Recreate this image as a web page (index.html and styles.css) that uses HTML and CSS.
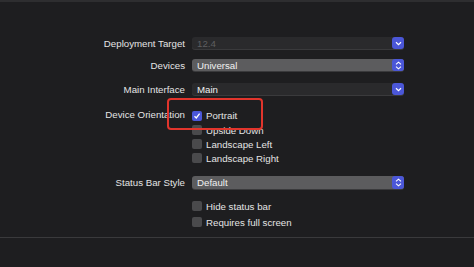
FILE: index.html
```html
<!DOCTYPE html>
<html>
  <head>
    <meta charset="UTF-8" />
    <meta name="viewport" content="width=device-width,initial-scale=1" />
    <title>Deployment Info</title>
    <link rel="stylesheet" href="styles.css">
  </head>
  <body>
    <div class="topbar"></div>
    <div class="panel">
      <div class="row popup-row first">
        <div class="label">Deployment Target</div>
        <div class="popup dim">
          <span class="value muted">12.4</span>
          <span class="arrow">
            <svg width="7" height="5" viewBox="0 0 7 5"><path d="M1 1.2 L3.5 3.6 L6 1.2" fill="none" stroke="#fff" stroke-width="1.2"/></svg>
          </span>
        </div>
      </div>
      <div class="row popup-row devices">
        <div class="label">Devices</div>
        <div class="popup">
          <span class="value">Universal</span>
          <span class="arrow">
            <svg width="7" height="9" viewBox="0 0 7 9"><path d="M1 3.4 L3.5 1.2 L6 3.4 M1 5.6 L3.5 7.8 L6 5.6" fill="none" stroke="#fff" stroke-width="1.1"/></svg>
          </span>
        </div>
      </div>
      <div class="row popup-row main">
        <div class="label">Main Interface</div>
        <div class="popup dim">
          <span class="value">Main</span>
          <span class="arrow">
            <svg width="7" height="5" viewBox="0 0 7 5"><path d="M1 1.2 L3.5 3.6 L6 1.2" fill="none" stroke="#fff" stroke-width="1.2"/></svg>
          </span>
        </div>
      </div>
      <div class="row check-group orientation">
        <div class="label">Device Orientation</div>
        <div class="checks">
          <div class="check first-check">
            <span class="box on">
              <svg width="8" height="8" viewBox="0 0 8 8"><path d="M1.5 4.2 L3.3 6 L6.6 1.6" fill="none" stroke="#fff" stroke-width="1.3"/></svg>
            </span>
            Portrait
          </div>
          <div class="check"><span class="box"></span>Upside Down</div>
          <div class="check"><span class="box"></span>Landscape Left</div>
          <div class="check"><span class="box"></span>Landscape Right</div>
        </div>
      </div>
      <div class="row popup-row status">
        <div class="label">Status Bar Style</div>
        <div class="popup">
          <span class="value">Default</span>
          <span class="arrow">
            <svg width="7" height="9" viewBox="0 0 7 9"><path d="M1 3.4 L3.5 1.2 L6 3.4 M1 5.6 L3.5 7.8 L6 5.6" fill="none" stroke="#fff" stroke-width="1.1"/></svg>
          </span>
        </div>
      </div>
      <div class="row check-group extras">
        <div class="label"></div>
        <div class="checks">
          <div class="check tall"><span class="box"></span>Hide status bar</div>
          <div class="check tall"><span class="box"></span>Requires full screen</div>
        </div>
      </div>
      <div class="highlight"></div>
    </div>
    <div class="divider"></div>
  </body>
</html>
```
FILE: styles.css
```css
* {
  --bg: #1e1e20;
  --text: #e4e4e4;
  --field: #2a2a2c;
  --field-on: #5c5c5e;
  --blue: #4b57d8;
  --box: #4a4a4c;
  --red: #e2352c;
  box-sizing: border-box;
}
body {
  margin: 0;
  padding: 0;
  background: var(--bg);
  font-family: "Liberation Sans", Arial, sans-serif;
  font-size: 9.7px;
  color: var(--text);
  height: 267px;
  overflow: hidden;
}
.topbar {
  height: 2px;
  background: #2e2e30;
}
.panel {
  position: relative;
  height: 235px;
  padding-top: 35px;
}
.row {
  display: flex;
  align-items: center;
  column-gap: 7px;
}
.label {
  width: 185px;
  flex: none;
  text-align: right;
}
.popup-row {
  height: 12px;
}
.devices {
  margin-top: 10px;
}
.main {
  margin-top: 12px;
}
.orientation {
  margin-top: 13px;
  align-items: flex-start;
}
.orientation .label {
  line-height: 14px;
}
.status {
  margin-top: 11px;
  height: 13px;
}
.extras {
  margin-top: 9px;
}
.popup {
  width: 212px;
  height: 100%;
  display: flex;
  align-items: center;
  justify-content: space-between;
  background: var(--field-on);
  border-radius: 3px;
  box-shadow: 0 1px 0 #3a3a3c;
}
.popup.dim {
  background: var(--field);
}
.value {
  padding-left: 5px;
  color: #f0f0f0;
}
.value.muted {
  color: #5e5e60;
}
.arrow {
  width: 12px;
  height: 100%;
  background: var(--blue);
  border-radius: 3px;
  display: flex;
  align-items: center;
  justify-content: center;
}
.checks {
  display: flex;
  flex-direction: column;
}
.check {
  height: 14px;
  display: flex;
  align-items: center;
  column-gap: 4px;
}
.check.first-check {
  height: 15px;
}
.check.tall {
  height: 16px;
}
.box {
  width: 10px;
  height: 10px;
  border-radius: 2px;
  background: var(--box);
  display: flex;
  align-items: center;
  justify-content: center;
}
.box.on {
  background: var(--blue);
}
.highlight {
  position: absolute;
  left: 167px;
  top: 96px;
  width: 96px;
  height: 32px;
  border: 2px solid var(--red);
  border-radius: 4px;
}
.divider {
  height: 1px;
  background: #3a3a3c;
}
```
